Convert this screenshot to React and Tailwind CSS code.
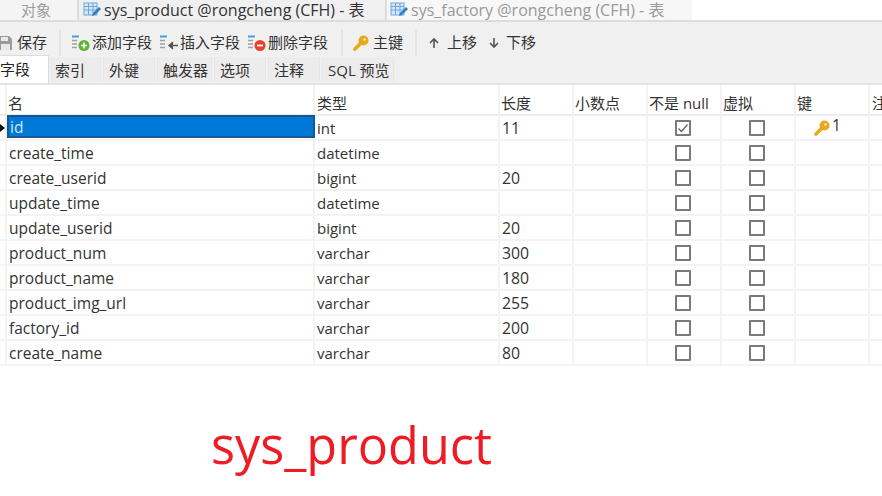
const cols = "grid-cols-[7px_308px_185px_74px_74px_74px_74px_74px_12px]";
const rows = [
  ["id", "int", "11", true, true],
  ["create_time", "datetime", ""],
  ["create_userid", "bigint", "20"],
  ["update_time", "datetime", ""],
  ["update_userid", "bigint", "20"],
  ["product_num", "varchar", "300"],
  ["product_name", "varchar", "180"],
  ["product_img_url", "varchar", "255"],
  ["factory_id", "varchar", "200"],
  ["create_name", "varchar", "80"],
];
const FF = "font-['Open_Sans','Noto_Sans_CJK_SC',sans-serif]";

function TableIcon() {
  return (
    <svg width="18" height="16" viewBox="0 0 18 16" className="shrink-0">
      <rect x="1" y="1" width="13" height="12" fill="#d6e6f5" stroke="#6fa8dc" />
      <path d="M1 4.5h13M1 8h13M5.5 1v12M10 1v12" stroke="#6fa8dc" />
      <path d="M9 14l1-3 6-6 2 2-6 6z" fill="#2f7fc4" />
    </svg>
  );
}
function Lines({ children }) {
  return (
    <svg width="20" height="18" viewBox="0 0 20 18" className="shrink-0">
      <path d="M1 2.5h7" stroke="#3fa0e0" strokeWidth="2" />
      <path d="M1 6.5h5M1 10h5M1 13.5h5" stroke="#a0a0a0" strokeWidth="1.6" />
      {children}
    </svg>
  );
}
function Key({ size = 16 }) {
  return (
    <svg width={size} height={size} viewBox="0 0 16 16" className="shrink-0">
      <circle cx="10.5" cy="5.5" r="5" fill="#e8a91f" />
      <circle cx="11.5" cy="4.5" r="1.2" fill="#fff3d0" />
      <path d="M8 8L2 14" stroke="#e8a91f" strokeWidth="3.6" strokeLinecap="round" />
    </svg>
  );
}
function Sep({ className = "" }) {
  return <div className={`h-[26px] w-[2px] shrink-0 bg-[#e4e4e4] ${className}`} />;
}
function Box({ checked }) {
  return (
    <div className="w-4 h-4 border-2 border-[#7a7a7a] rounded-[1px] bg-white flex items-center justify-center">
      {checked && (
        <svg width="12" height="12" viewBox="0 0 12 12">
          <path d="M1.5 6.5l3 3 6-7" fill="none" stroke="#606060" strokeWidth="1.3" />
        </svg>
      )}
    </div>
  );
}
function Tool({ icon, label, className = "" }) {
  return (
    <div className={`flex items-center shrink-0 ${className}`}>
      {icon}
      <span className="text-[15px] text-[#333]">{label}</span>
    </div>
  );
}
function SubTab({ label, w, pl, first }) {
  return first ? (
    <div className={`${w} h-[28px] bg-white border-t border-r border-[#dcdcdc] text-[15px] text-[#222] flex items-center`}>
      {label}
    </div>
  ) : (
    <div className={`${w} ${pl} h-[24px] mb-[2px] pt-[2px] bg-[#ececec] border-x border-[#e6e6e6] text-[15px] text-[#333] flex items-center whitespace-nowrap`}>
      {label}
    </div>
  );
}
function Cell({ children, className = "" }) {
  return (
    <div className={`border-r-2 border-[#f3f3f3] flex items-center min-w-0 ${className}`}>{children}</div>
  );
}

export default function App() {
  return (
    <div className={`w-[882px] h-[496px] overflow-hidden bg-white text-[15.5px] leading-none text-[#333] ${FF}`}>
      <div className="h-[20px] flex bg-white overflow-hidden">
        <div className="w-[79px] bg-[#f4f4f4] border-r-2 border-[#dcdcdc] pl-[21px] text-[#9c9c9c] text-[15px] flex items-center">对象</div>
        <div className="w-[306px] bg-[#f0f0f0] pl-[4px] flex items-center gap-[3px] text-[16px] text-[#333] whitespace-nowrap">
          <TableIcon />sys_product @rongcheng (CFH) - 表
        </div>
        <div className="w-[307px] bg-[#f7f7f7] border-l-2 border-[#dcdcdc] pl-[3px] flex items-center gap-[3px] text-[16px] text-[#999] whitespace-nowrap overflow-hidden">
          <TableIcon />sys_factory @rongcheng (CFH) - 表
        </div>
      </div>
      <div className="h-[2px] bg-[#dcdcdc]" />
      <div className="bg-[#f0f0f0] h-[61px] flex flex-col">
        <div className="h-[35px] flex items-center pt-[6px] overflow-hidden">
          <Tool
            icon={
              <svg width="13" height="16" viewBox="0 0 13 16" className="shrink-0">
                <path d="M0 1h10l3 3v11H0z" fill="#9a9a9a" />
                <rect x="2" y="2" width="7" height="4" fill="#e8e8e8" />
                <rect x="2" y="9" width="9" height="6" fill="#e8e8e8" />
              </svg>
            }
            label="保存"
            className="ml-[-1px] gap-[5px]"
          />
          <Sep className="ml-[12px]" />
          <Tool
            icon={
              <Lines>
                <circle cx="13" cy="11.5" r="5.5" fill="#5cb531" />
                <path d="M10 11.5h6M13 8.5v6" stroke="#fff" strokeWidth="1.6" />
              </Lines>
            }
            label="添加字段"
            className="ml-[10px] gap-[1px]"
          />
          <Tool
            icon={
              <Lines>
                <path d="M19 11.5h-8M14 8l-4 3.5 4 3.5" fill="#555" stroke="#555" strokeWidth="1.4" />
              </Lines>
            }
            label="插入字段"
            className="ml-[7px] gap-[1px]"
          />
          <Tool
            icon={
              <Lines>
                <circle cx="13" cy="11.5" r="5.5" fill="#e8402f" />
                <path d="M10 11.5h6" stroke="#fff" strokeWidth="1.8" />
              </Lines>
            }
            label="删除字段"
            className="ml-[7px] gap-[1px]"
          />
          <Sep className="ml-[13px]" />
          <Tool icon={<Key />} label="主键" className="ml-[10px] gap-[4px]" />
          <Sep className="ml-[12px]" />
          <Tool
            icon={
              <svg width="12" height="12" viewBox="0 0 12 12" className="shrink-0">
                <path d="M6 11V2M2 6l4-4 4 4" fill="none" stroke="#555" strokeWidth="1.6" />
              </svg>
            }
            label="上移"
            className="ml-[11px] gap-[7px]"
          />
          <Tool
            icon={
              <svg width="12" height="12" viewBox="0 0 12 12" className="shrink-0">
                <path d="M6 1v9M2 6l4 4 4-4" fill="none" stroke="#555" strokeWidth="1.6" />
              </svg>
            }
            label="下移"
            className="ml-[11px] gap-[6px]"
          />
        </div>
        <div className="flex items-end gap-[2px] h-[26px] mt-auto">
          <SubTab first label="字段" w="w-[49px]" />
          <SubTab label="索引" w="w-[50px]" pl="pl-[3px]" />
          <SubTab label="外键" w="w-[52px]" pl="pl-[5px]" />
          <SubTab label="触发器" w="w-[55px]" pl="pl-[5px]" />
          <SubTab label="选项" w="w-[52px]" pl="pl-[5px]" />
          <SubTab label="注释" w="w-[52px]" pl="pl-[5px]" />
          <SubTab label="SQL 预览" w="w-[72px]" pl="pl-[5px]" />
        </div>
      </div>
      <div className="h-[2px] bg-[#e4e4e4]" />
      <div className={`grid ${cols} h-[31px] border-b-2 border-[#ececec]`}>
        <Cell />
        {["名", "类型", "长度", "小数点", "不是 null", "虚拟", "键"].map((h) => (
          <Cell key={h} className={`${h === "类型" ? "pl-[2px]" : "pl-[1px]"} pt-[7px] text-[15px] whitespace-nowrap`}>{h}</Cell>
        ))}
        <div className="pl-[2px] pt-[7px] flex items-center text-[15px] overflow-hidden">注</div>
      </div>
      {rows.map(([name, type, len, nn, key], i) => (
        <div key={name} className={`grid ${cols} h-[25px] border-b-2 border-[#f3f3f3]`}>
          <Cell>
            {i === 0 && (
              <svg width="5" height="8" viewBox="0 0 5 8"><path d="M0 0l5 4-5 4z" fill="#111" /></svg>
            )}
          </Cell>
          {i === 0 ? (
            <div className="bg-[#0078d7] border-2 border-[#17568f] text-[#cfe6ff] flex items-center pl-[1px] pt-[2px] mb-[1px] mt-[-1px]">{name}</div>
          ) : (
            <Cell className="pl-[2px] pt-[2px]">{name}</Cell>
          )}
          <Cell className="pl-[2px] pt-[2px] text-[15px]">{type}</Cell>
          <Cell className="pl-[2px] pt-[2px] text-[15.8px]">{len}</Cell>
          <Cell />
          <Cell className="justify-center pr-[2px]"><Box checked={nn} /></Cell>
          <Cell className="justify-center pr-[2px]"><Box /></Cell>
          <Cell className="pl-[18px] gap-[2px]">
            {key && (
              <>
                <Key size={16} />
                <span className="pb-[4px]">1</span>
              </>
            )}
          </Cell>
          <div />
        </div>
      ))}
      <div className="pl-[211px] pt-[44px] text-[50.4px] leading-[70px] text-[#ee1c25]">sys_product</div>
    </div>
  );
}
